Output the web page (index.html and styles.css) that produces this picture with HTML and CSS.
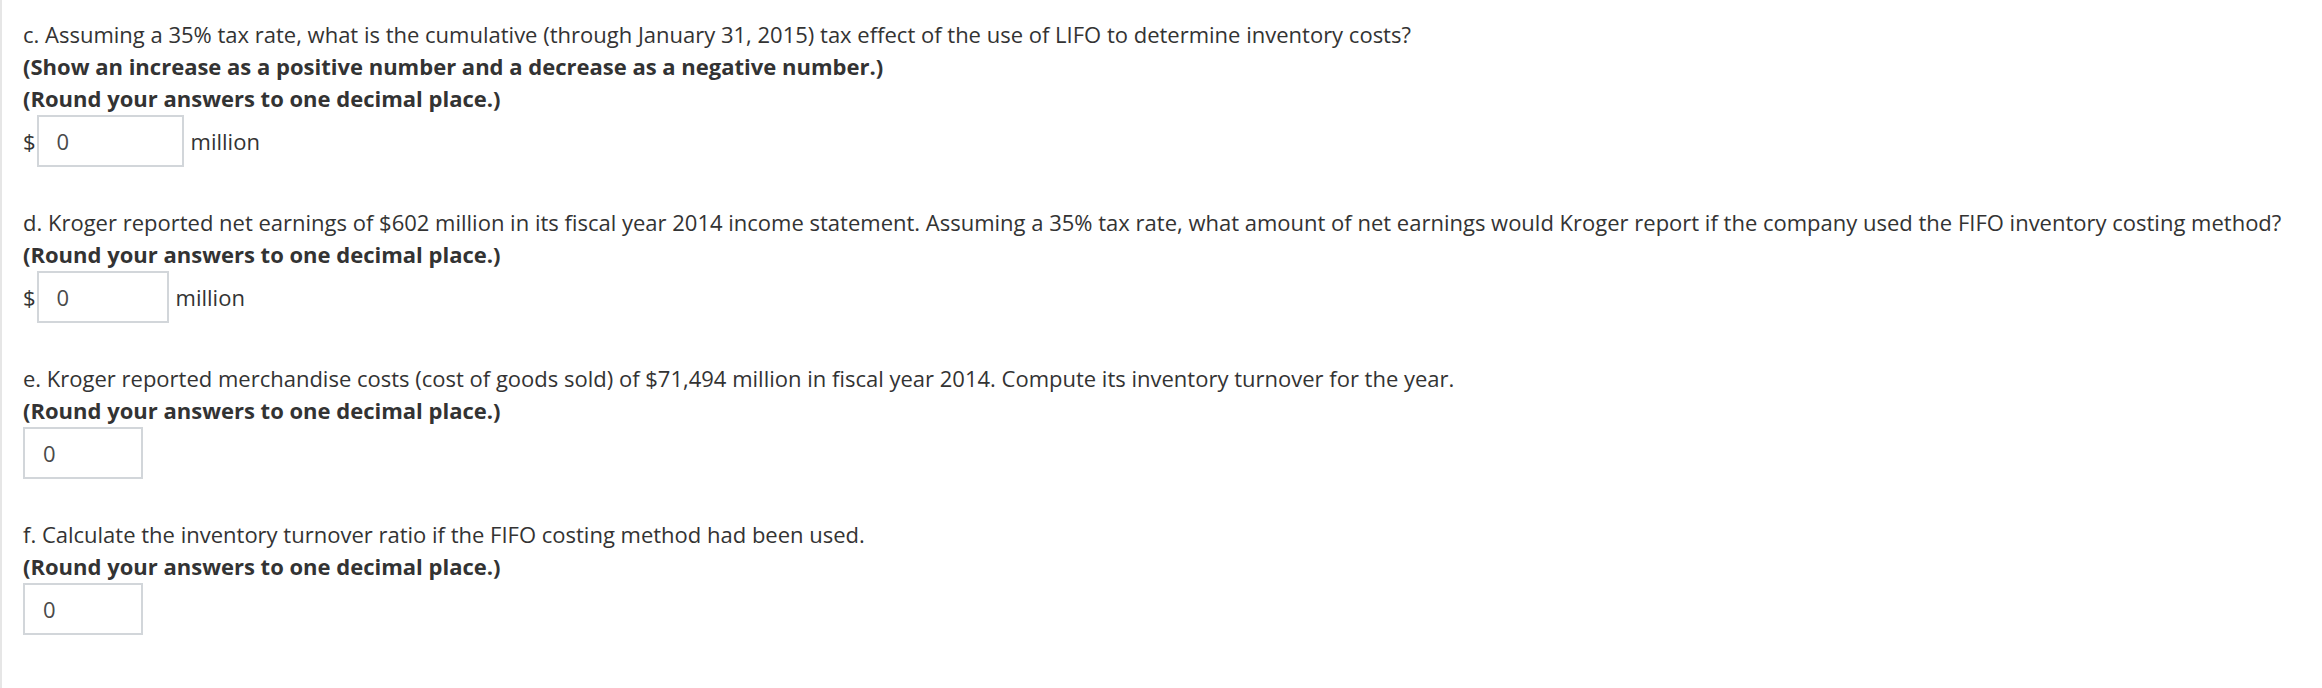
FILE: index.html
```html
<!DOCTYPE html>
<html lang="en">
<head>
<meta charset="utf-8">
<title>Kroger LIFO questions</title>
<link rel="stylesheet" href="styles.css">
</head>
<body>
<main class="page">
  <section class="question">
    <p class="line">c. Assuming a 35% tax rate, what is the cumulative (through January 31, 2015) tax effect of the use of LIFO to determine inventory costs?</p>
    <p class="line note">(Show an increase as a positive number and a decrease as a negative number.)</p>
    <p class="line note">(Round your answers to one decimal place.)</p>
    <div class="answer">
      <span class="currency">$</span>
      <input class="field field-wide" type="text" value="0">
      <span class="unit">million</span>
    </div>
  </section>

  <section class="question">
    <p class="line">d. Kroger reported net earnings of $602 million in its fiscal year 2014 income statement. Assuming a 35% tax rate, what amount of net earnings would Kroger report if the company used the FIFO inventory costing method?</p>
    <p class="line note">(Round your answers to one decimal place.)</p>
    <div class="answer">
      <span class="currency">$</span>
      <input class="field field-mid" type="text" value="0">
      <span class="unit">million</span>
    </div>
  </section>

  <section class="question">
    <p class="line">e. Kroger reported merchandise costs (cost of goods sold) of $71,494 million in fiscal year 2014. Compute its inventory turnover for the year.</p>
    <p class="line note">(Round your answers to one decimal place.)</p>
    <div class="answer">
      <input class="field field-narrow" type="text" value="0">
    </div>
  </section>

  <section class="question">
    <p class="line">f. Calculate the inventory turnover ratio if the FIFO costing method had been used.</p>
    <p class="line note">(Round your answers to one decimal place.)</p>
    <div class="answer">
      <input class="field field-narrow" type="text" value="0">
    </div>
  </section>
</main>
</body>
</html>
```
FILE: styles.css
```css
html, body {
  margin: 0;
  padding: 0;
  background: #ffffff;
}

body {
  font-family: "Open Sans", "Noto Sans", "Liberation Sans", sans-serif;
  font-size: 22px;
  color: #333333;
}

.page {
  min-height: 688px;
  box-sizing: border-box;
  border-left: 2px solid #e6e6e6;
  padding: 18px 0 0 21px;
  display: flex;
  flex-direction: column;
  gap: 39px;
}

.question {
  display: flex;
  flex-direction: column;
}

.line {
  margin: 0;
  line-height: 32px;
  white-space: nowrap;
}

.note {
  font-weight: 700;
}

.answer {
  display: flex;
  align-items: center;
  margin-top: 1px;
}

.currency {
  line-height: 32px;
}

.field {
  box-sizing: border-box;
  height: 52px;
  margin: 0 0 0 1px;
  padding: 0 0 0 18px;
  border: 2px solid #d2d6da;
  border-radius: 0;
  background: #ffffff;
  font-family: inherit;
  font-size: 22px;
  color: #4a4a4a;
  outline: none;
}

.field-wide {
  width: 147px;
}

.field-mid {
  width: 132px;
}

.field-narrow {
  width: 120px;
  margin-left: 0;
}

.unit {
  margin-left: 7px;
  line-height: 32px;
}
```
